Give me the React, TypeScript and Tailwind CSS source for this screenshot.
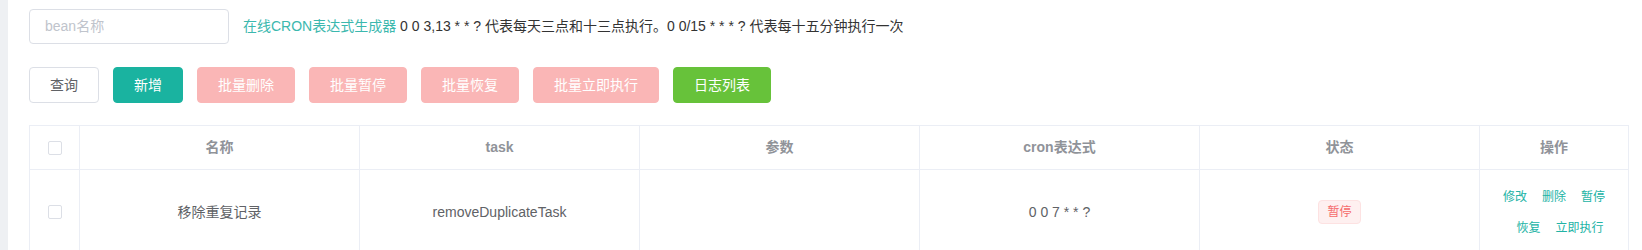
import React from 'react';

const font = { fontFamily: '"Liberation Sans", "Noto Sans CJK SC", sans-serif' };

const columns = ['名称', 'task', '参数', 'cron表达式', '状态'];

function Checkbox() {
  return <span className="inline-block w-[14px] h-[14px] border border-[#dcdfe6] rounded-[2px] bg-white" />;
}

function Btn({ children, className }: { children: React.ReactNode; className: string }) {
  return (
    <button
      className={`h-[36px] px-[20px] rounded-[4px] text-[14px] leading-none border ${className}`}
    >
      {children}
    </button>
  );
}

export default function App() {
  return (
    <div className="h-[250px] w-[1642px] overflow-hidden flex bg-white" style={font}>
      <div className="w-[8px] bg-[#eef0f3] shrink-0" />
      <div className="flex-1 pl-[21px] pt-[9px]">
        {/* Search line */}
        <div className="flex items-center">
          <div className="w-[200px] h-[35px] border border-[#dcdfe6] rounded-[4px] flex items-center pl-[15px] text-[14px] text-[#c0c4cc]">
            bean名称
          </div>
          <div className="ml-[14px] text-[14px] text-[#333333]">
            <a className="text-[#3cb8ae]">在线CRON表达式生成器</a> 0 0 3,13 * * ? 代表每天三点和十三点执行。0 0/15 * * * ? 代表每十五分钟执行一次
          </div>
        </div>

        {/* Toolbar */}
        <div className="flex gap-[14px] mt-[23px]">
          <Btn className="bg-white border-[#dcdfe6] text-[#606266] w-[70px] px-0">查询</Btn>
          <Btn className="bg-[#1ab3a0] border-[#1ab3a0] text-white w-[70px] px-0">新增</Btn>
          <Btn className="bg-[#fab6b6] border-[#fab6b6] text-white">批量删除</Btn>
          <Btn className="bg-[#fab6b6] border-[#fab6b6] text-white">批量暂停</Btn>
          <Btn className="bg-[#fab6b6] border-[#fab6b6] text-white">批量恢复</Btn>
          <Btn className="bg-[#fab6b6] border-[#fab6b6] text-white">批量立即执行</Btn>
          <Btn className="bg-[#67c23a] border-[#67c23a] text-white">日志列表</Btn>
        </div>

        {/* Table */}
        <div className="mt-[22px] w-[1600px] border-l border-t border-r border-[#ebeef5]">
          <div className="flex h-[44px] border-b border-[#ebeef5] text-[14px] font-bold text-[#909399]">
            <div className="w-[50px] border-r border-[#ebeef5] flex items-center justify-center">
              <Checkbox />
            </div>
            {columns.map((c) => (
              <div key={c} className="w-[280px] border-r border-[#ebeef5] flex items-center justify-center">
                {c}
              </div>
            ))}
            <div className="flex-1 flex items-center justify-center">操作</div>
          </div>
          <div className="flex h-[85px] border-b border-[#ebeef5] text-[14px] text-[#606266]">
            <div className="w-[50px] border-r border-[#ebeef5] flex items-center justify-center">
              <Checkbox />
            </div>
            <div className="w-[280px] border-r border-[#ebeef5] flex items-center justify-center">移除重复记录</div>
            <div className="w-[280px] border-r border-[#ebeef5] flex items-center justify-center">removeDuplicateTask</div>
            <div className="w-[280px] border-r border-[#ebeef5]" />
            <div className="w-[280px] border-r border-[#ebeef5] flex items-center justify-center">0 0 7 * * ?</div>
            <div className="w-[280px] border-r border-[#ebeef5] flex items-center justify-center">
              <span className="h-[24px] px-[8px] rounded-[4px] border border-[#fde2e2] bg-[#fef0f0] text-[#f56c6c] text-[12px] leading-[22px]">
                暂停
              </span>
            </div>
            <div className="flex-1 flex flex-col items-center justify-center text-[12px] text-[#22b3a5]">
              <div className="h-[31px] flex items-center gap-[15px]">
                <span>修改</span>
                <span>删除</span>
                <span>暂停</span>
              </div>
              <div className="h-[31px] flex items-center gap-[15px] pl-[12px]">
                <span>恢复</span>
                <span>立即执行</span>
              </div>
            </div>
          </div>
        </div>
      </div>
    </div>
  );
}
